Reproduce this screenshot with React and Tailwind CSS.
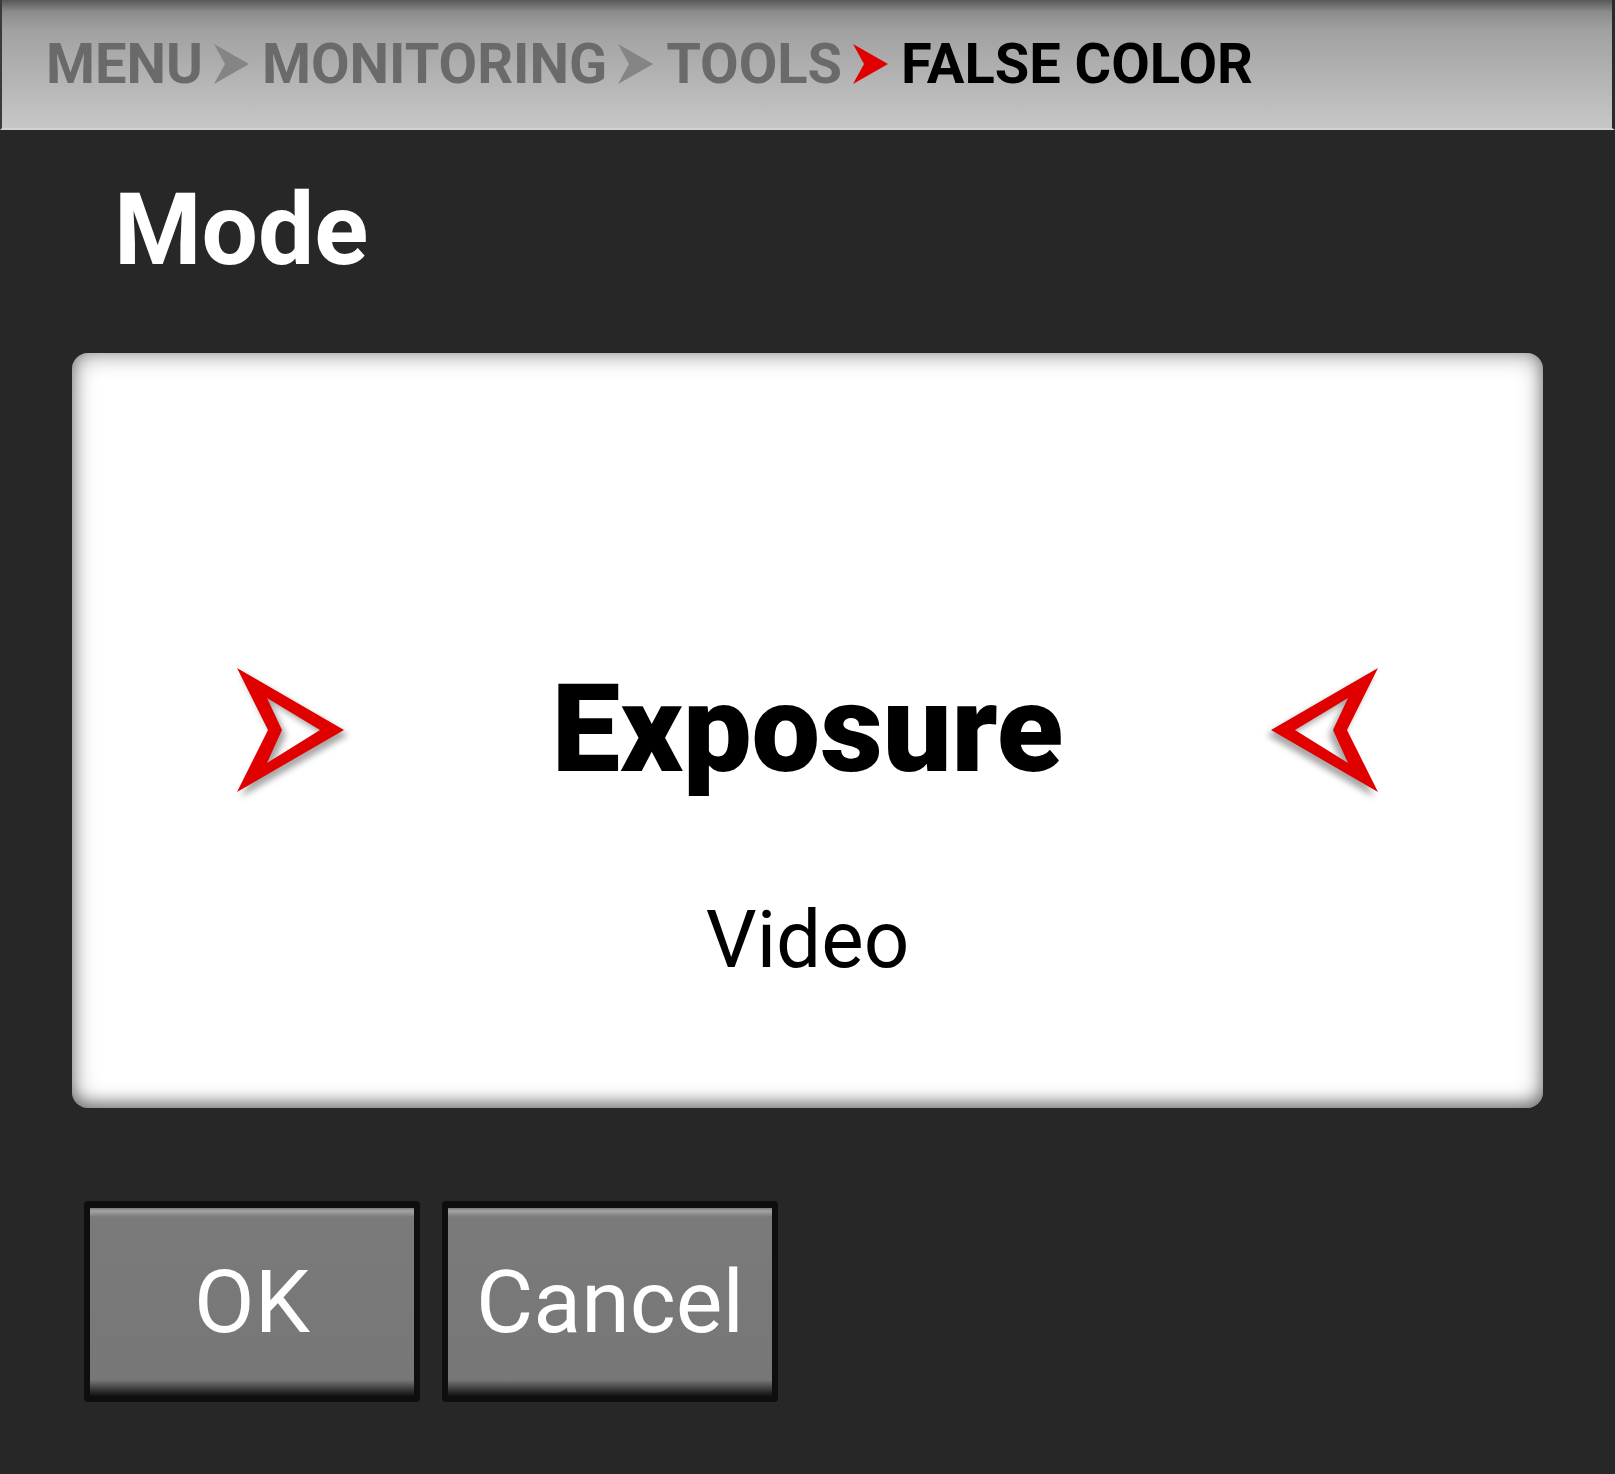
import React from 'react';

const crumbs = ['MENU', 'MONITORING', 'TOOLS'];

const Chevron = ({ red }) => (
  <svg width="35" height="40" viewBox="0 0 35 40" className="ml-[11px] mr-[13px] shrink-0">
    <polygon points="0,0 35,20 0,40 11,20" fill={red ? '#e10000' : '#858585'} />
  </svg>
);

// red outlined arrow head, drawn pointing right
const Pointer = ({ flip }) => (
  <svg
    width="108"
    height="124"
    viewBox="0 0 108 124"
    className={`shrink-0 overflow-visible drop-shadow-[4px_5px_3px_rgba(0,0,0,0.35)] ${flip ? '-scale-x-100' : ''}`}
  >
    <path
      fillRule="evenodd"
      fill="#e00000"
      d="M0 0 L107 62 L0 124 L31 62 Z M30 30 L45 62 L30 95 L83 62 Z"
    />
  </svg>
);

const Button = ({ label }) => (
  <button className="w-[336px] h-[201px] bg-[#0e0e0e] rounded-[4px] pt-[7px] px-[6px] pb-[6px]">
    <div className="h-full flex items-center justify-center bg-[linear-gradient(to_bottom,#7c7c7c_0px,#a4a4a4_3px,#7a7a7a_9px,#777777_172px,#151515_187px)]">
      <span className="text-[88px] leading-none text-white">{label}</span>
    </div>
  </button>
);

export default function App() {
  return (
    <div className="min-h-screen w-full bg-[#272727] font-['Roboto','Liberation_Sans',sans-serif]">
      {/* Breadcrumb bar */}
      <header className="h-[130px] flex items-center pl-[44px] border-b-2 border-l-2 border-r-[3px] border-b-[#d2d2d2] border-l-[#3a3a3a] border-r-[#2a2a2a] bg-[linear-gradient(to_bottom,#585858_0px,#8c8c8c_12px,#a1a1a1_30px,#c6c6c6_126px)]">
        {crumbs.map((c) => (
          <React.Fragment key={c}>
            <span className="text-[56px] leading-none font-bold text-[#6a6a6a]">{c}</span>
            <Chevron red={c === 'TOOLS'} />
          </React.Fragment>
        ))}
        <span className="text-[56px] leading-none font-bold text-black">FALSE COLOR</span>
      </header>

      <main className="px-[72px] pt-[50px]">
        <h1 className="ml-[42px] text-[100px] leading-none font-bold text-white">Mode</h1>

        {/* Value picker */}
        <div className="mt-[73px] h-[755px] rounded-[16px] bg-white flex flex-col items-center pt-[315px] shadow-[inset_0_0_24px_rgba(0,0,0,0.45),inset_0_-6px_14px_rgba(0,0,0,0.3)]">
          <div className="w-full flex items-center justify-between px-[165px]">
            <Pointer />
            <span className="text-[122px] leading-none font-black text-black">Exposure</span>
            <Pointer flip />
          </div>
          <span className="mt-[108px] text-[80px] leading-none text-black">Video</span>
        </div>

        <div className="mt-[93px] ml-[12px] flex gap-[22px]">
          <Button label="OK" />
          <Button label="Cancel" />
        </div>
      </main>
    </div>
  );
}
